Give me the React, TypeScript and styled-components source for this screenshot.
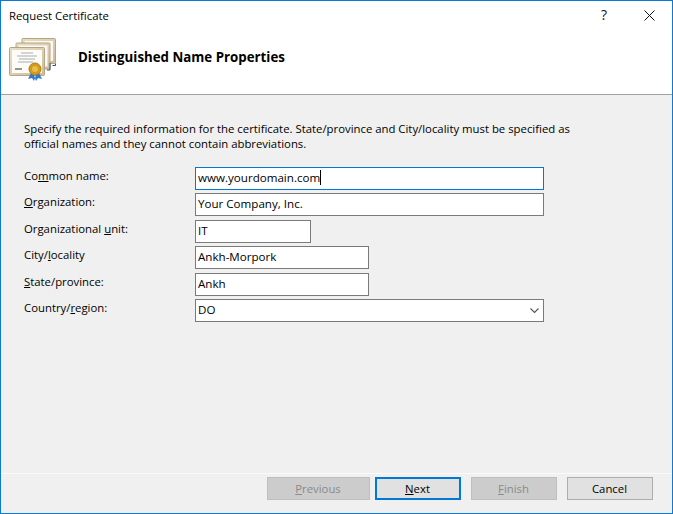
import React from "react";
import styled, { createGlobalStyle } from "styled-components";

const Global = createGlobalStyle`
  html, body { margin: 0; padding: 0; background: #f0f0f0; }
  * { box-sizing: border-box; }
`;

const Win = styled.div`
  width: 673px;
  height: 514px;
  border: 1px solid #0a7ad6;
  display: flex;
  flex-direction: column;
  background: #f0f0f0;
  font-family: "Open Sans", "Noto Sans", sans-serif;
  font-size: 11.35px;
  color: #000;
  overflow: hidden;
`;

const TitleBar = styled.div`
  height: 29px;
  flex: none;
  background: #fff;
  display: flex;
  align-items: center;
  padding-left: 8px;
`;

const TitleText = styled.div`
  flex: 1;
`;

const CaptionButton = styled.div`
  width: 46px;
  height: 29px;
  display: flex;
  align-items: center;
  justify-content: center;
  font-size: 14px;
  color: #111;
`;

const HelpGlyph = styled.span`
  margin: 0 0 2px 2px;
`;

const Header = styled.div`
  height: 65px;
  flex: none;
  background: #fff;
  border-bottom: 1px solid #a0a0a0;
  display: flex;
  align-items: center;
  padding-left: 8px;
`;

const IconSlot = styled.div`
  width: 48px;
  height: 44px;
  margin-top: -5px;
  flex: none;
`;

const HeaderTitle = styled.div`
  margin-left: 21px;
  margin-top: -11px;
  font-weight: 700;
  font-size: 13.3px;
`;

const Body = styled.div`
  flex: 1;
  padding: 26px 0 0 23px;
`;

const Intro = styled.p`
  margin: 0 0 16px;
  width: 560px;
  line-height: 15px;
`;

const Form = styled.div`
  display: grid;
  grid-template-columns: 171px 349px;
  grid-auto-rows: 23px;
  row-gap: 3.4px;
`;

const Label = styled.label`
  padding-top: 1px;
  line-height: 16px;
  height: 17px;
`;

const Field = styled.div<{ $w: number; $focus?: boolean }>`
  width: ${(p) => p.$w}px;
  height: 23px;
  background: #fff;
  border: 1px solid ${(p) => (p.$focus ? "#0078d7" : "#7a7a7a")};
  padding: 0 0 2px 2px;
  display: flex;
  align-items: center;
  position: relative;
  font-size: 11.6px;
`;

const Caret = styled.span`
  display: inline-block;
  width: 1px;
  height: 15px;
  background: #000;
`;

const Chevron = styled.svg`
  position: absolute;
  right: 4px;
  top: 8px;
`;

const Footer = styled.div`
  height: 40px;
  flex: none;
  border-top: 1px solid #fafafa;
  display: flex;
  padding: 3px 0 0 266px;
  align-items: flex-start;
`;

const Btn = styled.div<{ $w: number; $ml?: number; $state?: "disabled" | "default" }>`
  width: ${(p) => p.$w}px;
  margin-left: ${(p) => p.$ml ?? 0}px;
  height: 23px;
  padding-right: 1px;
  display: flex;
  align-items: center;
  justify-content: center;
  background: ${(p) => (p.$state === "disabled" ? "#cccccc" : "#e1e1e1")};
  color: ${(p) => (p.$state === "disabled" ? "#8a8a8a" : "#000")};
  border: ${(p) =>
    p.$state === "default"
      ? "2px solid #0078d7"
      : p.$state === "disabled"
        ? "1px solid #bfbfbf"
        : "1px solid #adadad"};
`;

const Certificates = () => (
  <svg width="48" height="44" viewBox="0 0 48 44">
    <defs>
      <linearGradient id="paper" x1="0" y1="0" x2="1" y2="1">
        <stop offset="0" stopColor="#eadfc8" />
        <stop offset="1" stopColor="#cdbd9e" />
      </linearGradient>
    </defs>
    <rect x="13" y="0.500" width="33.500" height="25" rx="1" fill="url(#paper)" stroke="#b5a585" />
    <rect x="16" y="3" width="28" height="20" fill="#fbf9f2" />
    <path d="M46.500 25.500v2h-3" stroke="#3c4a66" fill="none" />
    <rect x="7" y="5" width="34" height="26" rx="1" fill="url(#paper)" stroke="#b5a585" />
    <rect x="10" y="7.500" width="28.500" height="21" fill="#fbf9f2" />
    <path d="M41 25v7h-3" stroke="#3c4a66" fill="none" />
    <rect x="0.500" y="9.500" width="35" height="28" rx="1" fill="url(#paper)" stroke="#b5a585" />
    <rect x="3" y="12" width="30" height="23" fill="#fdfcf7" />
    <path d="M12 15h12M8 18h20M10 21h16M9 24h15" stroke="#a6adb2" strokeWidth="1" />
    <path d="M6 31h7" stroke="#6f7478" strokeWidth="1.500" />
    <path d="M22 35l-3 6 4-1 2 3 2-6zM30 35l3 6-4-1-2 3-2-6z" fill="#2f78cf" />
    <circle cx="26" cy="31" r="6" fill="#d29b1c" stroke="#b07d10" />
    <circle cx="26" cy="31" r="3" fill="#e6bd4e" />
  </svg>
);

const App = () => (
  <>
    <Global />
    <Win>
      <TitleBar>
        <TitleText>Request Certificate</TitleText>
        <CaptionButton><HelpGlyph>?</HelpGlyph></CaptionButton>
        <CaptionButton>
          <svg width="11" height="11" viewBox="0 0 11 11">
            <path d="M.5.5l10 10M10.500.5l-10 10" stroke="#111" fill="none" />
          </svg>
        </CaptionButton>
      </TitleBar>
      <Header>
        <IconSlot><Certificates /></IconSlot>
        <HeaderTitle>Distinguished Name Properties</HeaderTitle>
      </Header>
      <Body>
        <Intro>
          Specify the required information for the certificate. State/province and City/locality must be specified as official names and they cannot contain abbreviations.
        </Intro>
        <Form>
          <Label>Co<u>m</u>mon name:</Label>
          <Field $w={349} $focus>www.yourdomain.com<Caret /></Field>
          <Label><u>O</u>rganization:</Label>
          <Field $w={349}>Your Company, Inc.</Field>
          <Label>Organizational <u>u</u>nit:</Label>
          <Field $w={116}>IT</Field>
          <Label>City/<u>l</u>ocality</Label>
          <Field $w={174}>Ankh-Morpork</Field>
          <Label><u>S</u>tate/province:</Label>
          <Field $w={174}>Ankh</Field>
          <Label>Country/<u>r</u>egion:</Label>
          <Field $w={349}>
            DO
            <Chevron width="9" height="6" viewBox="0 0 9 6">
              <path d="M.5.500l4 4 4-4" stroke="#555" strokeWidth="1.100" fill="none" />
            </Chevron>
          </Field>
        </Form>
      </Body>
      <Footer>
        <Btn $w={103} $state="disabled"><span><u>P</u>revious</span></Btn>
        <Btn $w={86} $ml={5} $state="default"><span><u>N</u>ext</span></Btn>
        <Btn $w={86} $ml={10} $state="disabled"><span><u>F</u>inish</span></Btn>
        <Btn $w={86} $ml={10}>Cancel</Btn>
      </Footer>
    </Win>
  </>
);

export default App;
